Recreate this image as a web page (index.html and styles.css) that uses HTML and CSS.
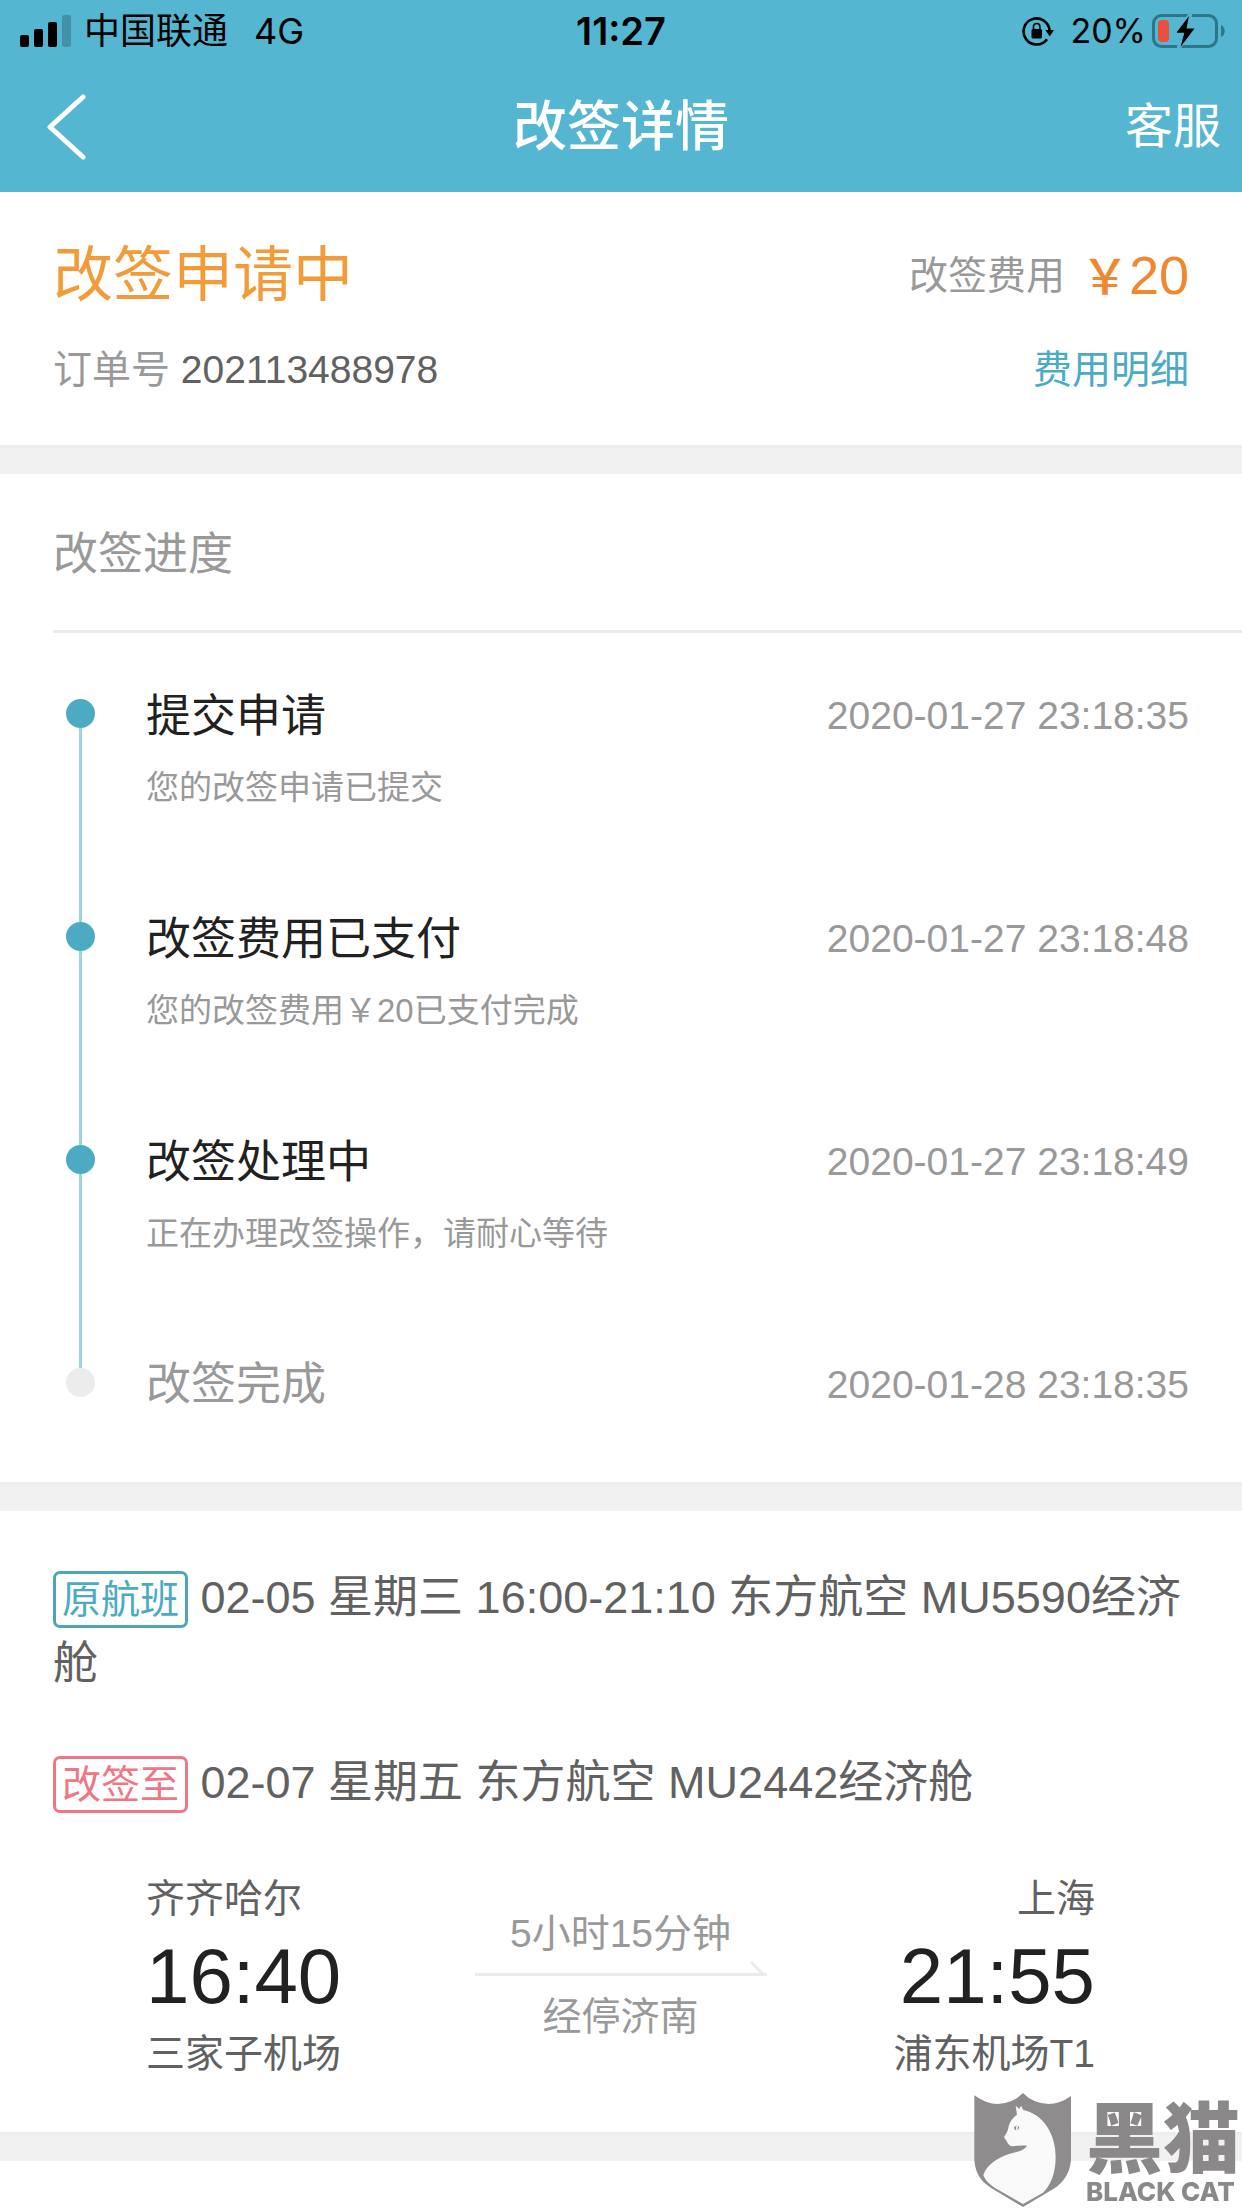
FILE: index.html
```html
<!DOCTYPE html>
<html lang="zh-CN">
<head>
<meta charset="utf-8">
<meta name="viewport" content="width=device-width">
<title>改签详情</title>
<link rel="stylesheet" href="styles.css">
</head>
<body>
<header class="header">
  <div class="status">
    <div class="status-side">
      <svg class="signal" viewBox="0 0 52 32" aria-hidden="true"><rect x="0" y="20" width="9" height="12" rx="2"/><rect x="14" y="14" width="9" height="18" rx="2"/><rect x="28" y="7" width="9" height="25" rx="2"/><rect x="42" y="0" width="9" height="32" rx="2" opacity=".2"/></svg>
      <span>中国联通</span><span class="network">4G</span>
    </div>
    <div class="clock">11:27</div>
    <div class="status-side status-right">
      <svg class="lock" viewBox="0 0 32 30" aria-hidden="true"><path d="M27.500 14.200A13 13 0 1 0 25 23.200" fill="none" stroke="#000" stroke-width="2.600"/><path d="M23.400 14h8.600l-4.300 6.600z"/><rect x="9.500" y="13" width="10.500" height="9.600" rx="1.500"/><path d="M11.500 14v-3.300a3.200 3.200 0 0 1 6.400 0V14" fill="none" stroke="#000" stroke-width="1.600"/></svg>
      <span class="charge">20%</span>
      <svg class="battery" viewBox="0 0 74 34" aria-hidden="true"><rect x="1.500" y="1.500" width="63" height="31" rx="8" fill="none" stroke="#2f7588" stroke-width="3"/><path d="M69 11c5 2 5 10 0 12z" fill="#2f7588"/><rect x="6" y="6" width="11" height="22" rx="4" fill="#ec4e3c"/><path d="M39 -1L22 20h9l-5 15 18-21h-9z" stroke="#54b6d0" stroke-width="3"/><path d="M37 2L24.500 18.500h8L28.500 33 42.500 14.500h-8z"/></svg>
    </div>
  </div>
  <nav class="navbar">
    <button class="back" type="button" aria-label="返回"><svg viewBox="0 0 40 66" aria-hidden="true"><path d="M36 3L3 33l33 30" fill="none" stroke="#fff" stroke-width="5" stroke-linecap="round" stroke-linejoin="round"/></svg></button>
    <h1 class="title">改签详情</h1>
    <a class="service" href="#service">客服</a>
  </nav>
</header>
<main class="main">
  <section class="card summary">
    <div class="row">
      <h2 class="state">改签申请中</h2>
      <div class="fee"><span>改签费用</span><span class="amount"><span class="yen">￥</span>20</span></div>
    </div>
    <div class="row row-small">
      <p class="order">订单号 <span class="order-no">202113488978</span></p>
      <a class="detail" href="#detail">费用明细</a>
    </div>
  </section>
  <section class="card progress">
    <h2 class="progress-title">改签进度</h2>
    <ol class="steps">
      <li class="step">
        <div class="rail"><i class="dot"></i><i class="line"></i></div>
        <div class="step-text"><h3>提交申请</h3><p>您的改签申请已提交</p></div>
        <time>2020-01-27 23:18:35</time>
      </li>
      <li class="step">
        <div class="rail"><i class="dot"></i><i class="line"></i></div>
        <div class="step-text"><h3>改签费用已支付</h3><p>您的改签费用￥20已支付完成</p></div>
        <time>2020-01-27 23:18:48</time>
      </li>
      <li class="step">
        <div class="rail"><i class="dot"></i><i class="line"></i></div>
        <div class="step-text"><h3>改签处理中</h3><p>正在办理改签操作，请耐心等待</p></div>
        <time>2020-01-27 23:18:49</time>
      </li>
      <li class="step pending">
        <div class="rail"><i class="dot"></i></div>
        <div class="step-text"><h3>改签完成</h3></div>
        <time>2020-01-28 23:18:35</time>
      </li>
    </ol>
  </section>
  <section class="card flights">
    <p class="flight"><span class="tag">原航班</span> 02-05 星期三 16:00-21:10 东方航空 MU5590经济舱</p>
    <p class="flight"><span class="tag tag-new">改签至</span> 02-07 星期五 东方航空 MU2442经济舱</p>
    <div class="route">
      <div class="place">
        <div>齐齐哈尔</div>
        <time class="hour">16:40</time>
        <div>三家子机场</div>
      </div>
      <div class="leg">
        <div>5小时15分钟</div>
        <svg class="arrow" viewBox="0 0 292 15" aria-hidden="true"><path d="M0 13.500h292M276 1l12 12" fill="none" stroke="#ebebeb" stroke-width="3"/></svg>
        <div>经停济南</div>
      </div>
      <div class="place arrive">
        <div>上海</div>
        <time class="hour">21:55</time>
        <div>浦东机场T1</div>
      </div>
    </div>
  </section>
  <section class="rest"></section>
</main>
<aside class="watermark">
  <svg class="shield" viewBox="90 96 297 348" aria-hidden="true">
    <path class="shield-body" d="M94 106Q130 132 164 132Q210 130 240 99Q270 130 316 132Q350 132 384 108V300C380 350 350 378 322 392L240 441L158 392C120 370 98 350 94 300Z"/>
    <path class="cat" d="M218 137L229 147L234 137L241 150C300 163 338 220 338 292C338 335 325 375 300 398L240 432L160 386C140 374 126 360 121 345C130 315 165 292 200 281C225 275 245 270 252 257C235 256 222 257 208 259C197 256 194 249 190 242L183 232C188 222 194 216 196 204C198 188 208 174 222 164Z"/>
    <path class="eye" d="M213 201l10-5q-7 6-3 15-7-1-7-10zM225 197q8 6-2 13z"/>
  </svg>
  <div class="brand"><span class="brand-cn">黑猫</span><span class="brand-en">BLACK CAT</span></div>
</aside>
</body>
</html>
```
FILE: styles.css
```css
* { box-sizing: border-box; }
body, h1, h2, h3, p, ol { margin: 0; padding: 0; font-weight: 400; }
body {
  display: flex;
  flex-direction: column;
  min-height: 100vh;
  background: #fff;
  color: #999;
  font-family: "Liberation Sans", "Noto Sans CJK SC", sans-serif;
  font-size: 39px;
  line-height: 54px;
}
a { text-decoration: none; }
ol { list-style: none; }
svg { display: block; flex: none; }

.header { background: #54b6d0; color: #fff; }
.status {
  display: grid;
  grid-template-columns: 1fr auto 1fr;
  align-items: center;
  height: 62px;
  padding: 0 16px;
  color: #000;
  font-family: Inter, "Noto Sans CJK SC", sans-serif;
  font-size: 36px;
}
.status-side { display: flex; align-items: center; }
.status-right { justify-content: flex-end; }
.signal { width: 52px; height: 32px; margin-right: 12px; margin-left: 4px; }
.network { margin-left: 26px; }
.clock { font-size: 38px; font-weight: 600; }
.charge { font-size: 34px; }
.lock { width: 32px; height: 30px; margin-right: 16px; }
.battery { width: 74px; height: 34px; margin-left: 6px; overflow: visible; }

.navbar {
  display: grid;
  grid-template-columns: 1fr auto 1fr;
  align-items: center;
  height: 130px;
  padding: 0 21px;
}
.back { justify-self: start; margin-left: 26px; padding: 0; border: 0; background: none; }
.back svg { width: 40px; height: 66px; }
.title { font-size: 54px; font-weight: 500; }
.service { justify-self: end; color: #fff; font-size: 48px; }

.main {
  display: flex;
  flex: 1;
  flex-direction: column;
  gap: 26px;
  background: #f1f1f1;
}
.card { background: #fff; border-bottom: 3px solid #ededed; }
.rest { flex: 1; background: #fff; }

.summary { padding: 42px 53px 48px; }
.row { display: flex; align-items: center; justify-content: space-between; }
.row-small { margin-top: 25px; }
.state { color: #f19c38; font-size: 60px; line-height: 84px; }
.fee { display: flex; align-items: center; gap: 16px; }
.amount { color: #ee8833; font-size: 54px; }
.yen { font-size: 48px; font-weight: 500; }
.order-no { color: #616161; }
.detail { color: #4cabc3; }

.progress-title {
  margin-left: 53px;
  padding: 51px 0 45px;
  border-bottom: 3px solid #ebebeb;
  font-size: 45px;
  line-height: 60px;
}
.steps { padding: 53px 53px 67px; }
.step { display: flex; min-height: 223px; line-height: 60px; }
.rail {
  display: flex;
  flex-direction: column;
  align-items: center;
  width: 54px;
  margin-right: 39px;
  padding-top: 13px;
}
.dot { width: 29px; height: 29px; border-radius: 50%; background: #4cabc3; }
.line { flex: 1; width: 3px; margin-bottom: -13px; background: #9dd3dc; }
.step-text { flex: 1; }
.step h3 { color: #212121; font-size: 45px; line-height: 62px; }
.step p { margin-top: 17px; font-size: 33px; line-height: 45px; }
.pending { min-height: 60px; }
.step.pending h3 { color: #999; line-height: 60px; }
.pending .dot { background: #ececec; }

.flights { padding: 54px 53px 51px; color: #616161; }
.flight { font-size: 45px; line-height: 66px; }
.flight + .flight { margin-top: 53px; }
.tag {
  display: inline-block;
  padding: 0 6px;
  border: 3px solid #4da6b8;
  border-radius: 7px;
  color: #4cabc3;
  font-size: 39px;
  line-height: 51px;
}
.tag-new { border-color: #ee7686; color: #ee7686; }
.route {
  display: grid;
  grid-template-columns: 1fr auto 1fr;
  margin-top: 56px;
  padding: 0 94px 0 93px;
}
.hour { display: block; color: #212121; font-size: 78px; line-height: 101px; }
.arrive { text-align: right; }
.leg { padding-top: 35px; color: #999; text-align: center; }
.arrow { width: 292px; height: 15px; margin-bottom: 14px; }

.watermark {
  position: fixed;
  right: 2px;
  bottom: 0;
  display: flex;
  gap: 14px;
  color: #8b888a;
}
.shield { width: 99px; height: 116px; }
.shield-body { fill: #8f8c8e; }
.cat { fill: #fff; opacity: .95; }
.eye { fill: #8f8c8e; }
.brand { display: flex; flex-direction: column; }
.brand-cn {
  font-family: "Noto Sans CJK SC", sans-serif;
  font-size: 77px;
  font-weight: 900;
  line-height: 84px;
}
.brand-en {
  font-family: Inter, sans-serif;
  font-size: 26px;
  font-weight: 800;
  line-height: 32px;
  white-space: nowrap;
}
```
